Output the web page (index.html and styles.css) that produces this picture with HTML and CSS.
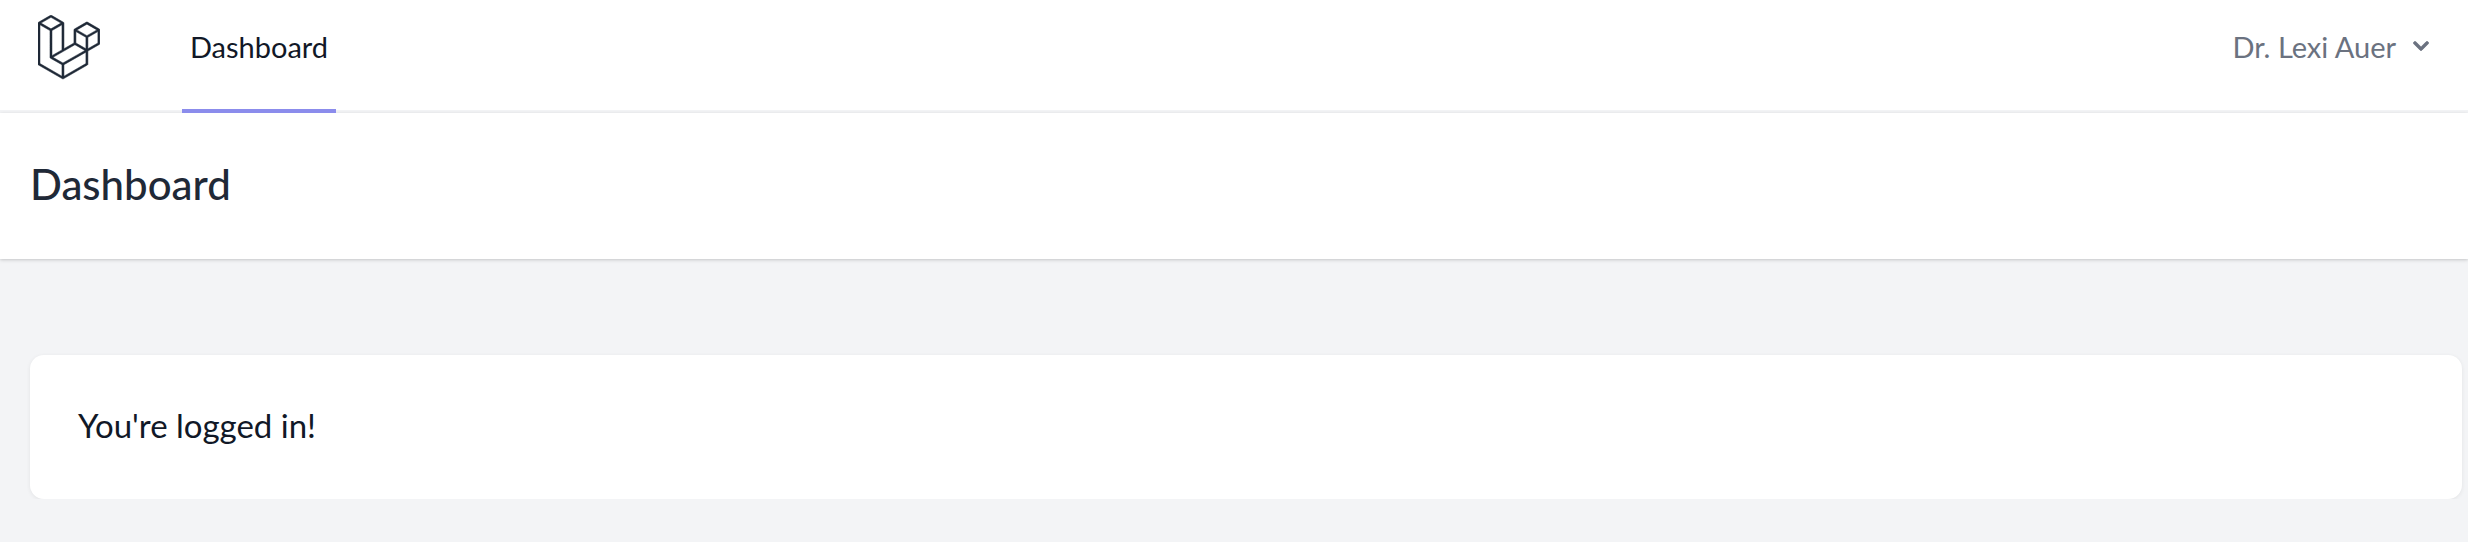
FILE: index.html
```html
<!DOCTYPE html>
<html lang="en">
<head>
    <meta charset="UTF-8">
    <title>Dashboard</title>
    <link rel="stylesheet" href="styles.css">
</head>
<body>
    <nav class="navbar">
        <div class="nav-left">
            <a href="#" class="logo">
                <svg class="logo-icon" viewBox="0 0 62 65" xmlns="http://www.w3.org/2000/svg">
                    <path d="M61.8548 14.6253C61.8778 14.7102 61.8895 14.7978 61.8897 14.8858V28.5615C61.8898 28.737 61.8434 28.9095 61.7554 29.0614C61.6675 29.2132 61.5409 29.3392 61.3887 29.4265L49.9104 36.0351V49.1337C49.9104 49.4902 49.7209 49.8192 49.4118 49.9987L25.4519 63.7916C25.3971 63.8227 25.3372 63.8427 25.2774 63.8639C25.255 63.8714 25.2338 63.8851 25.2101 63.8913C25.0426 63.9354 24.8666 63.9354 24.6991 63.8913C24.6716 63.8838 24.6467 63.8689 24.6205 63.8589C24.5657 63.8389 24.5084 63.8215 24.456 63.7916L0.501061 49.9987C0.348882 49.9113 0.222437 49.7853 0.134469 49.6334C0.0465019 49.4816 0.000120578 49.3092 0 49.1337L0 8.10652C0 8.01678 0.0124642 7.92953 0.0348998 7.84477C0.0423783 7.8161 0.0598282 7.78993 0.0697995 7.76126C0.0884958 7.70891 0.105946 7.65531 0.133367 7.6067C0.152063 7.5743 0.179485 7.54812 0.20192 7.51821C0.230588 7.47832 0.256763 7.43719 0.290416 7.40229C0.319084 7.37362 0.356476 7.35243 0.388883 7.32751C0.425029 7.29759 0.457436 7.26518 0.498568 7.2415L12.4779 0.345059C12.6296 0.257786 12.8015 0.211853 12.9765 0.211853C13.1515 0.211853 13.3234 0.257786 13.475 0.345059L25.4531 7.2415H25.4556C25.4955 7.26643 25.5292 7.29759 25.5653 7.32626C25.5977 7.35119 25.6339 7.37362 25.6625 7.40104C25.6974 7.43719 25.7224 7.47832 25.7523 7.51821C25.7735 7.54812 25.8021 7.5743 25.8196 7.6067C25.8483 7.65656 25.8645 7.70891 25.8844 7.76126C25.8944 7.78993 25.9118 7.8161 25.9193 7.84602C25.9423 7.93096 25.954 8.01853 25.9542 8.10652V33.7317L35.9355 27.9844V14.8846C35.9355 14.7973 35.948 14.7088 35.9704 14.6253C35.9792 14.5954 35.9954 14.5692 36.0053 14.5405C36.0253 14.4882 36.0427 14.4346 36.0702 14.386C36.0888 14.3536 36.1163 14.3274 36.1375 14.2975C36.1674 14.2576 36.1923 14.2165 36.2272 14.1816C36.2559 14.1529 36.292 14.1317 36.3244 14.1068C36.3618 14.0769 36.3942 14.0445 36.4341 14.0208L48.4147 7.12434C48.5663 7.03694 48.7383 6.99094 48.9133 6.99094C49.0883 6.99094 49.2602 7.03694 49.4118 7.12434L61.3899 14.0208C61.4323 14.0457 61.4647 14.0769 61.5021 14.1055C61.5333 14.1305 61.5694 14.1529 61.5981 14.1803C61.633 14.2165 61.6579 14.2576 61.6878 14.2975C61.7103 14.3274 61.7377 14.3536 61.7551 14.386C61.7838 14.4346 61.8 14.4882 61.8199 14.5405C61.8312 14.5692 61.8474 14.5954 61.8548 14.6253ZM59.893 27.9844V16.6121L55.7013 19.0252L49.9104 22.3593V33.7317L59.8942 27.9844H59.893ZM47.9149 48.5566V37.1768L42.2187 40.4299L25.953 49.7133V61.2003L47.9149 48.5566ZM1.99677 9.83281V48.5566L23.9562 61.199V49.7145L12.4841 43.2219L12.4804 43.2194L12.4754 43.2169C12.4368 43.1945 12.4044 43.1621 12.3682 43.1347C12.3371 43.1097 12.3009 43.0898 12.2735 43.0624L12.271 43.0586C12.2386 43.0275 12.2162 42.9888 12.1887 42.9539C12.1638 42.9203 12.1339 42.8916 12.114 42.8567L12.1127 42.853C12.0903 42.8156 12.0766 42.7707 12.0604 42.7283C12.0442 42.6909 12.023 42.656 12.013 42.6161C12.0005 42.5688 11.998 42.5177 11.9931 42.4691C11.9881 42.4317 11.9781 42.3943 11.9781 42.3569V15.5801L6.18848 12.2446L1.99677 9.83281ZM12.9777 2.36177L2.99764 8.10652L12.9752 13.8513L22.9541 8.10527L12.9752 2.36177H12.9777ZM18.1678 38.2138L23.9574 34.8809V9.83281L19.7657 12.2459L13.9749 15.5801V40.6281L18.1678 38.2138ZM48.9133 9.14105L38.9344 14.8858L48.9133 20.6305L58.8909 14.8846L48.9133 9.14105ZM47.9149 22.3593L42.124 19.0252L37.9323 16.6121V27.9844L43.7219 31.3174L47.9149 33.7317V22.3593ZM24.9533 47.987L39.59 39.631L46.9065 35.4555L36.9352 29.7145L25.4544 36.3242L14.9907 42.3482L24.9533 47.987Z"/>
                </svg>
            </a>
            <a href="#" class="nav-link">Dashboard</a>
        </div>
        <button class="user-menu">
            <span>Dr. Lexi Auer</span>
            <svg class="chevron" viewBox="0 0 20 20" xmlns="http://www.w3.org/2000/svg">
                <path fill-rule="evenodd" clip-rule="evenodd" d="M5.293 7.293a1 1 0 011.414 0L10 10.586l3.293-3.293a1 1 0 111.414 1.414l-4 4a1 1 0 01-1.414 0l-4-4a1 1 0 010-1.414z"/>
            </svg>
        </button>
    </nav>

    <header class="page-header">
        <h1>Dashboard</h1>
    </header>

    <main class="content">
        <div class="card">You're logged in!</div>
    </main>
</body>
</html>
```

FILE: styles.css
```css
* {
    margin: 0;
    padding: 0;
    box-sizing: border-box;
}

body {
    background-color: #f3f4f6;
    color: #111827;
    font-family: 'Lato', 'Noto Sans', sans-serif;
}

.navbar {
    height: 113px;
    background-color: white;
    border-bottom: 3px solid #f3f4f6;
    display: flex;
    justify-content: space-between;
    padding: 0 32px 0 38px;
}

.nav-left {
    display: flex;
}

.logo {
    padding-top: 15px;
    margin-right: 82px;
}

.logo-icon {
    display: block;
    width: 62px;
    height: 65px;
    fill: #1f2937;
    stroke: #1f2937;
    stroke-width: 0.5;
}

.nav-link {
    height: 113px;
    width: 154px;
    padding-top: 30px;
    border-bottom: 4px solid #8b8cec;
    color: #111827;
    font-size: 29px;
    line-height: 34px;
    text-align: center;
    text-decoration: none;
}

.user-menu {
    height: 92px;
    display: flex;
    align-items: center;
    gap: 10px;
    background: none;
    border: none;
    color: #6b7280;
    font-family: inherit;
    font-size: 29px;
}

.chevron {
    width: 30px;
    height: 30px;
    fill: #6b7280;
    stroke: #6b7280;
    stroke-width: 0.5;
}

.page-header {
    height: 146px;
    padding: 0 30px 4px;
    background-color: white;
    box-shadow: 0 1px 4px rgba(0, 0, 0, 0.14), 0 1px 2px rgba(0, 0, 0, 0.06);
    display: flex;
    align-items: center;
}

.page-header h1 {
    color: #1f2937;
    font-size: 42px;
    font-weight: 500;
    line-height: 1;
}

.content {
    padding: 96px 6px 0 30px;
}

.card {
    height: 144px;
    padding: 0 48px 4px;
    background-color: white;
    border-radius: 14px;
    box-shadow: 0 1px 4px rgba(0, 0, 0, 0.07);
    display: flex;
    align-items: center;
    font-size: 33px;
}
```
